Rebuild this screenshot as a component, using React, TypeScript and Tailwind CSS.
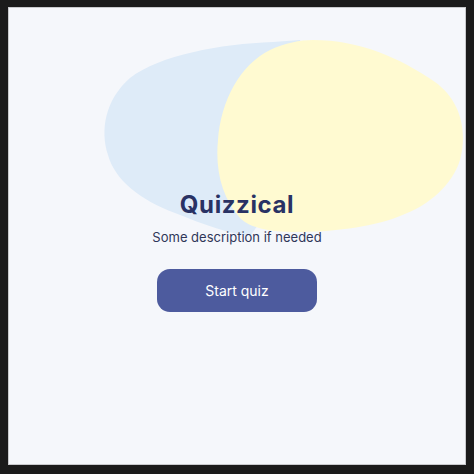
export default function App() {
  return (
    <div className="w-screen h-screen bg-[#1b1b1b] pt-[7px] pl-[8px]">
      <div
        className="relative w-[458px] h-[458px] overflow-hidden bg-[#f5f7fb] border border-[#c9cacd] flex flex-col items-center pt-[182px]"
        style={{ fontFamily: 'Inter, "Noto Sans", sans-serif' }}
      >
        {/* background blobs */}
        <svg className="absolute inset-0" width="458" height="458" viewBox="0 0 458 458">
          <g transform="translate(-9 -8)">
            <path
              d="M273 42 C220 44 160 55 130 78 C105 100 100 130 108 155 C115 180 140 200 175 213 C205 225 230 234 250 236 L320 140 L300 40 Z"
              fill="#deebf8"
            />
            <path
              d="M313 40 C360 40 400 58 435 82 C460 100 468 130 460 160 C452 185 430 205 400 216 C370 228 330 232 295 232 C270 232 250 228 240 218 C222 198 215 170 218 140 C221 100 240 65 270 50 C285 43 300 40 313 40 Z"
              fill="#fffad1"
            />
          </g>
        </svg>

        <div className="relative flex flex-col items-center">
          <h1 className="text-[24px] leading-[30px] font-bold tracking-[0.025em] text-[#293264]">
            Quizzical
          </h1>
          <p className="mt-[7px] text-[13px] leading-[20px] text-[#2f3658]">
            Some description if needed
          </p>
          <button className="mt-[22px] w-[160px] h-[43px] rounded-[13px] bg-[#4d5b9e] text-white text-[14px]">
            Start quiz
          </button>
        </div>
      </div>
    </div>
  );
}
